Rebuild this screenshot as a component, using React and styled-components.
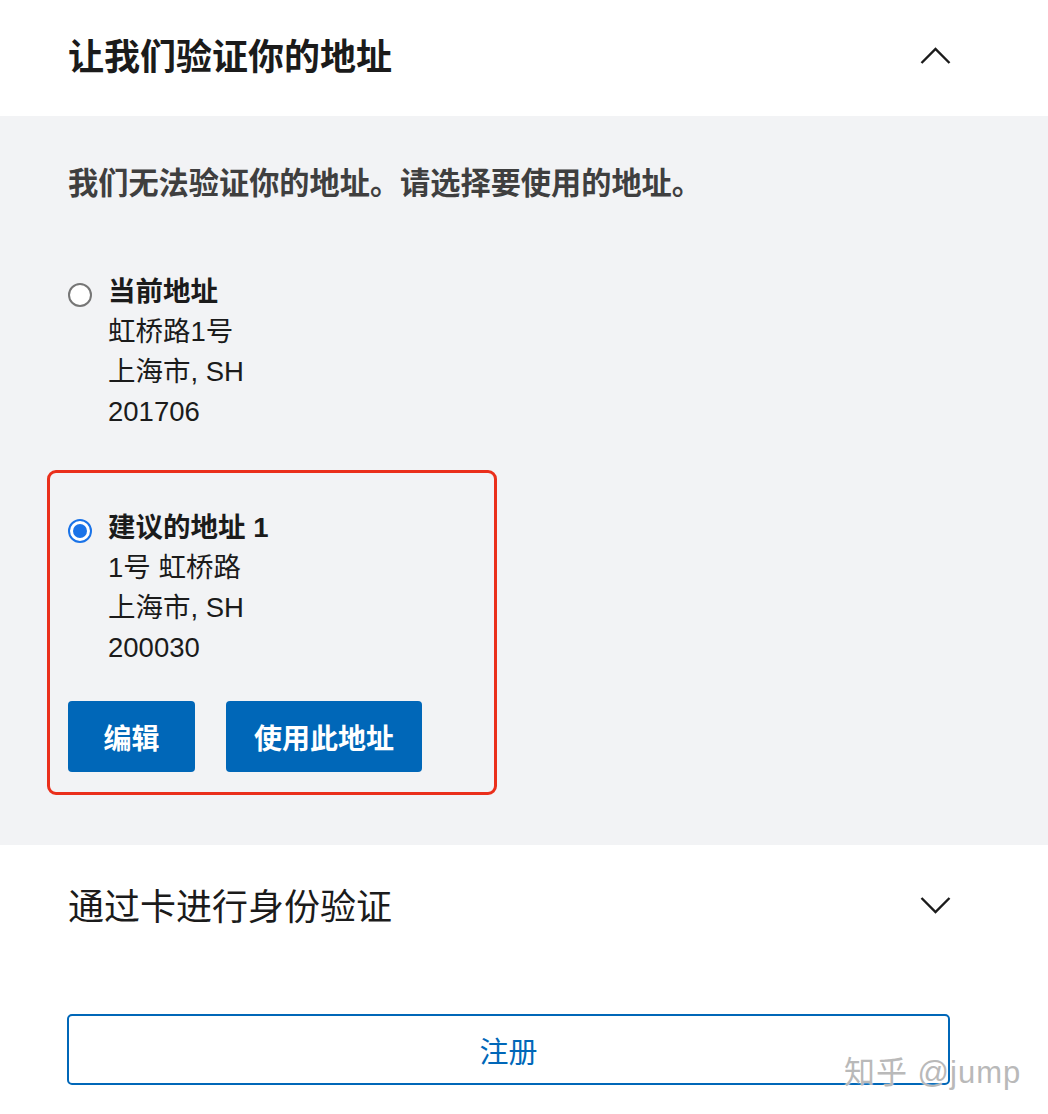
import styled, { createGlobalStyle } from "styled-components";

const GlobalStyle = createGlobalStyle`
  body {
    margin: 0;
    background: #fff;
    font-family: "Liberation Sans", "Noto Sans CJK SC", sans-serif;
    color: #1b1b1b;
  }
`;

const Page = styled.div`
  position: relative;
  width: 1048px;
  min-height: 1114px;
  overflow: hidden;
`;

const Header = styled.div`
  display: flex;
  align-items: center;
  justify-content: space-between;
  height: ${(p) => p.$height}px;
  padding: 0 97px 0 68px;
  box-sizing: border-box;
  background: #fff;
`;

const Title = styled.h2`
  margin: 0;
  font-size: 36px;
  line-height: 44px;
  font-weight: ${(p) => (p.$bold ? 700 : 400)};
  color: #1b1b1b;
`;

const Chevron = styled.svg`
  width: 31px;
  height: 17px;
  margin-top: ${(p) => p.$offset || 0}px;
`;

const Panel = styled.div`
  background: #f2f3f5;
  padding: 50px 68px 50px 68px;
`;

const Intro = styled.p`
  margin: 0 0 70px;
  font-size: 30.2px;
  line-height: 36px;
  font-weight: 700;
  color: #3f3f3f;
`;

const Option = styled.div`
  display: flex;
  gap: 16px;
`;

const Highlight = styled.div`
  width: 450px;
  box-sizing: border-box;
  margin: 38px 0 0 -21px;
  padding: 35px 18px 20px 18px;
  border: 3px solid #ea2f1b;
  border-radius: 9px;
`;

const Radio = styled.span`
  flex: none;
  width: 24px;
  height: 24px;
  margin-top: 11px;
  box-sizing: border-box;
  border-radius: 50%;
  border: 2px solid ${(p) => (p.$checked ? "#1a73e8" : "#767676")};
  background: #fff;
  display: flex;
  align-items: center;
  justify-content: center;

  &::after {
    content: "";
    display: ${(p) => (p.$checked ? "block" : "none")};
    width: 14px;
    height: 14px;
    border-radius: 50%;
    background: #1a73e8;
  }
`;

const Lines = styled.div`
  display: flex;
  flex-direction: column;
  font-size: 27.5px;
  line-height: 40px;
  color: #1b1b1b;
`;

const Label = styled.span`
  font-weight: 700;
`;

const Actions = styled.div`
  display: flex;
  gap: 31px;
  margin-top: 33px;
`;

const PrimaryButton = styled.button`
  height: 71px;
  width: ${(p) => p.$width}px;
  padding: 0;
  border: none;
  border-radius: 4px;
  background: #0067b8;
  color: #fff;
  font-family: inherit;
  font-size: 28px;
  font-weight: 700;
`;

const Footer = styled.div`
  padding: 0 98px 0 67px;
`;

const OutlineButton = styled.button`
  display: block;
  width: 100%;
  height: 71px;
  margin-top: 43px;
  border: 2px solid #0067b8;
  border-radius: 5px;
  background: #fff;
  color: #0067b8;
  font-family: inherit;
  font-size: 29px;
`;

const Watermark = styled.span`
  position: absolute;
  left: 844px;
  top: 1047px;
  font-size: 31px;
  color: #b9b9b9;
  letter-spacing: 1px;
  text-shadow: 0 0 2px #fff;
  pointer-events: none;
`;

const ChevronIcon = ({ up, offset }) => (
  <Chevron viewBox="0 0 31 17" $offset={offset}>
    <polyline
      points={up ? "1.5,16 15.5,2 29.5,16" : "1.5,1 15.5,15 29.5,1"}
      fill="none"
      stroke="#1b1b1b"
      strokeWidth="2.4"
    />
  </Chevron>
);

const AddressLines = ({ label, lines }) => (
  <Lines>
    <Label>{label}</Label>
    {lines.map((l) => (
      <span key={l}>{l}</span>
    ))}
  </Lines>
);

export default function App() {
  return (
    <Page>
      <GlobalStyle />
      <Header $height={116}>
        <Title $bold>让我们验证你的地址</Title>
        <ChevronIcon up offset={-5} />
      </Header>

      <Panel>
        <Intro>我们无法验证你的地址。请选择要使用的地址。</Intro>

        <Option>
          <Radio />
          <AddressLines label="当前地址" lines={["虹桥路1号", "上海市, SH", "201706"]} />
        </Option>

        <Highlight>
          <Option>
            <Radio $checked />
            <AddressLines label="建议的地址 1" lines={["1号 虹桥路", "上海市, SH", "200030"]} />
          </Option>
          <Actions>
            <PrimaryButton $width={127}>编辑</PrimaryButton>
            <PrimaryButton $width={196}>使用此地址</PrimaryButton>
          </Actions>
        </Highlight>
      </Panel>

      <Header $height={126}>
        <Title>通过卡进行身份验证</Title>
        <ChevronIcon offset={-6} />
      </Header>

      <Footer>
        <OutlineButton>注册</OutlineButton>
      </Footer>

      <Watermark>知乎 @jump</Watermark>
    </Page>
  );
}
